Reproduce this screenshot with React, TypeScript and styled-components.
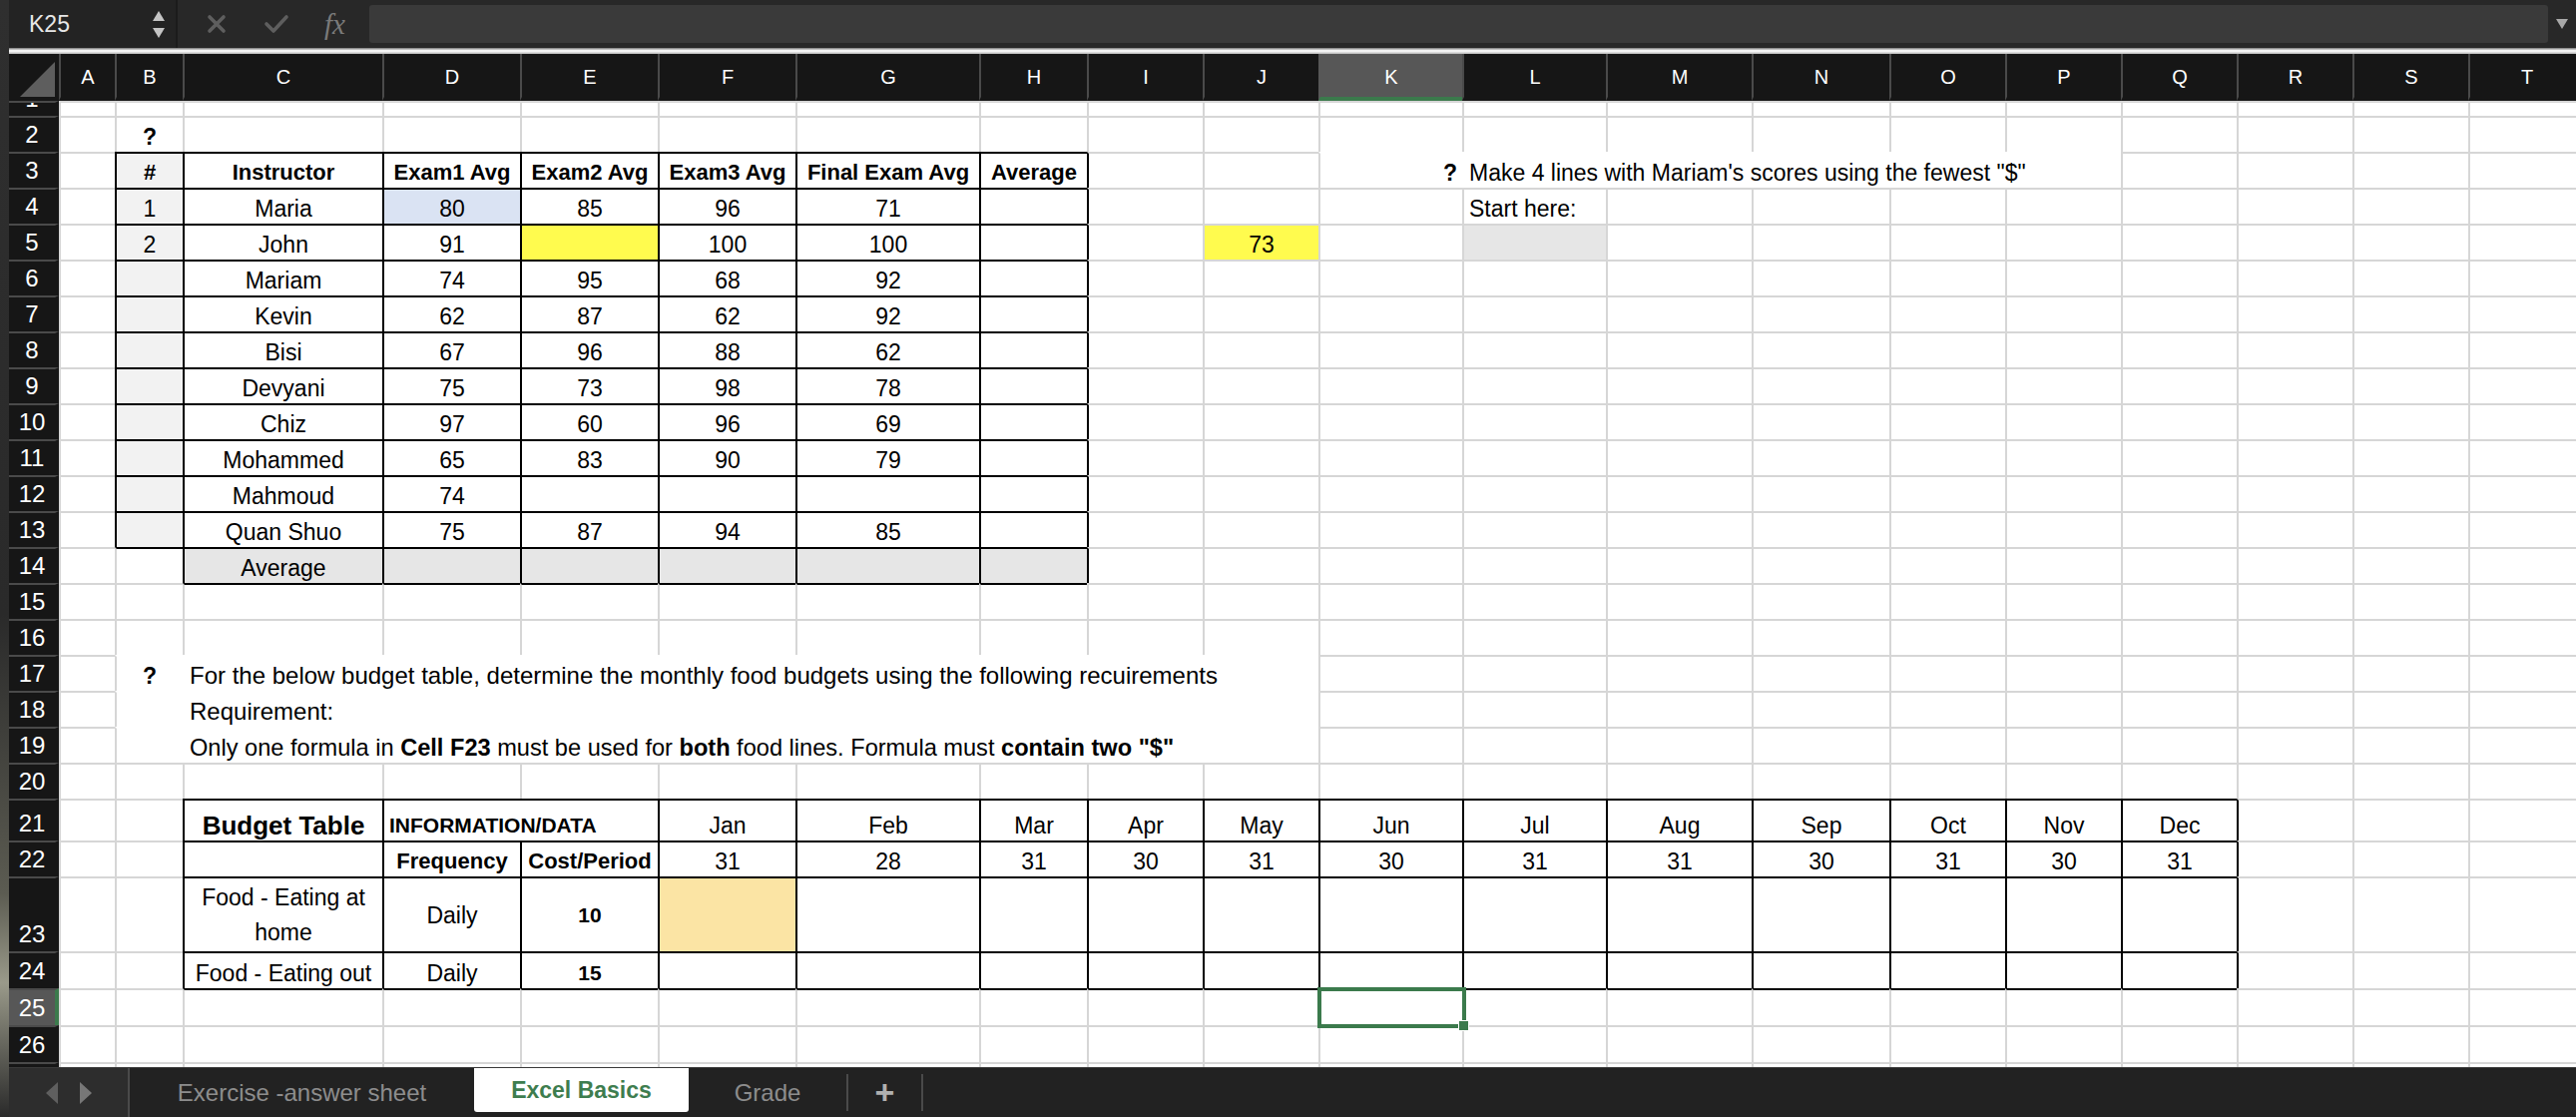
import React from "react";
import styled, { createGlobalStyle } from "styled-components";

const GlobalStyle = createGlobalStyle`
  html, body {
    margin: 0;
    padding: 0;
    background: #2c2c2c;
    overflow: hidden;
  }
  body {
    font-family: "Liberation Sans", Arial, sans-serif;
  }
`;

const GREEN = "#3b7a4c";
const GRID = "#d6d6d6";

const COLS = [
  { k: "A", w: 56 },
  { k: "B", w: 68 },
  { k: "C", w: 200 },
  { k: "D", w: 138 },
  { k: "E", w: 138 },
  { k: "F", w: 138 },
  { k: "G", w: 184 },
  { k: "H", w: 108 },
  { k: "I", w: 116 },
  { k: "J", w: 116 },
  { k: "K", w: 144 },
  { k: "L", w: 144 },
  { k: "M", w: 146 },
  { k: "N", w: 138 },
  { k: "O", w: 116 },
  { k: "P", w: 116 },
  { k: "Q", w: 116 },
  { k: "R", w: 116 },
  { k: "S", w: 116 },
  { k: "T", w: 116 },
];

const ROWS: { n: string; h: number }[] = [
  { n: "1", h: 15 },
  ...Array.from({ length: 19 }, (_, i) => ({ n: String(i + 2), h: 36 })),
  { n: "21", h: 42 },
  { n: "22", h: 36 },
  { n: "23", h: 75 },
  { n: "24", h: 37 },
  { n: "25", h: 37 },
  { n: "26", h: 37 },
  { n: "", h: 5 },
];

type Box = [number, number, number, number];
// column index (A = 0), row number
const BOXES: Box[] = [
  [1, 3, 7, 13],
  [2, 14, 7, 14],
  [2, 21, 16, 24],
];
const FILLS: Box[] = [
  [1, 17, 9, 19],
  [10, 3, 15, 3],
];

const inBox = (c: number, r: number, b: Box) =>
  c >= b[0] && c <= b[2] && r >= b[1] && r <= b[3];
const boxed = (c: number, r: number) => BOXES.some((b) => inBox(c, r, b));
const filled = (c: number, r: number) => FILLS.some((b) => inBox(c, r, b));

type Line = "grid" | "black" | "none";
const lineColor = (l: Line) =>
  l === "black" ? "#000" : l === "grid" ? GRID : "transparent";

const topLine = (c: number, r: number): Line => {
  if (boxed(c, r) || boxed(c, r - 1)) return "black";
  if (filled(c, r)) return "none";
  return "grid";
};
const leftLine = (c: number, r: number): Line => {
  if (boxed(c, r) || boxed(c - 1, r)) return "black";
  if (filled(c, r) && filled(c - 1, r)) return "none";
  return "grid";
};

type Def = {
  v?: React.ReactNode;
  bold?: boolean;
  align?: "left" | "center" | "right";
  valign?: "center" | "bottom";
  size?: number;
  bg?: string;
  wrap?: boolean;
  span?: number;
  over?: boolean;
  sel?: boolean;
};

const SCORES = [
  ["1", "Maria", "80", "85", "96", "71"],
  ["2", "John", "91", "", "100", "100"],
  ["", "Mariam", "74", "95", "68", "92"],
  ["", "Kevin", "62", "87", "62", "92"],
  ["", "Bisi", "67", "96", "88", "62"],
  ["", "Devyani", "75", "73", "98", "78"],
  ["", "Chiz", "97", "60", "96", "69"],
  ["", "Mohammed", "65", "83", "90", "79"],
  ["", "Mahmoud", "74", "", "", ""],
  ["", "Quan Shuo", "75", "87", "94", "85"],
];

const MONTHS = [
  ["Jan", "31"],
  ["Feb", "28"],
  ["Mar", "31"],
  ["Apr", "30"],
  ["May", "31"],
  ["Jun", "30"],
  ["Jul", "31"],
  ["Aug", "31"],
  ["Sep", "30"],
  ["Oct", "31"],
  ["Nov", "30"],
  ["Dec", "31"],
];

const SHEET: Record<string, Def> = {
  B2: { v: "?", bold: true },
  B3: { v: "#", bold: true, size: 22 },
  C3: { v: "Instructor", bold: true, size: 22 },
  D3: { v: "Exam1 Avg", bold: true, size: 22 },
  E3: { v: "Exam2 Avg", bold: true, size: 22 },
  F3: { v: "Exam3 Avg", bold: true, size: 22 },
  G3: { v: "Final Exam Avg", bold: true, size: 22 },
  H3: { v: "Average", bold: true, size: 22 },
  K3: { v: "?", bold: true, align: "right" },
  L3: { v: 'Make 4 lines with Mariam\'s scores using the fewest "$"', align: "left", over: true },
  L4: { v: "Start here:", align: "left" },
  J5: { v: "73", bg: "#fffb4e" },
  L5: { bg: "#e6e6e6" },
  C14: { v: "Average", bg: "#e6e6e6" },
  B17: { v: "?", bold: true },
  C17: {
    v: "For the below budget table, determine the monthly food budgets using the following recuirements",
    align: "left",
    over: true,
    size: 24,
  },
  C18: { v: "Requirement:", align: "left", over: true, size: 24 },
  C19: {
    v: (
      <>
        Only one formula in <b>Cell F23</b> must be used for <b>both</b> food lines. Formula must{" "}
        <b>contain two "$"</b>
      </>
    ),
    align: "left",
    over: true,
    size: 23.6,
  },
  C21: { v: "Budget Table", bold: true, size: 26 },
  D21: { v: "INFORMATION/DATA", bold: true, size: 21, align: "left", span: 2 },
  D22: { v: "Frequency", bold: true, size: 22 },
  E22: { v: "Cost/Period", bold: true, size: 22 },
  C23: { v: "Food - Eating at home", wrap: true, valign: "center" },
  D23: { v: "Daily", valign: "center" },
  E23: { v: "10", bold: true, size: 21, valign: "center" },
  F23: { bg: "#fbe4a4" },
  C24: { v: "Food - Eating out" },
  D24: { v: "Daily" },
  E24: { v: "15", bold: true, size: 21 },
  K25: { sel: true },
};

SCORES.forEach((row, i) => {
  const r = i + 4;
  ["B", "C", "D", "E", "F", "G"].forEach((c, j) => {
    SHEET[c + r] = { ...(SHEET[c + r] ?? {}), v: row[j] };
  });
  SHEET["H" + r] = SHEET["H" + r] ?? {};
});
for (let r = 3; r <= 13; r++) {
  SHEET["B" + r] = { ...(SHEET["B" + r] ?? {}), bg: "#f2f2f2" };
}
SHEET.D4 = { ...SHEET.D4, bg: "#dae3f3" };
SHEET.E5 = { ...SHEET.E5, bg: "#fffb4e" };
["D", "E", "F", "G", "H"].forEach((c) => {
  SHEET[c + 14] = { bg: "#e6e6e6" };
});
MONTHS.forEach(([m, d], i) => {
  const c = COLS[5 + i].k;
  SHEET[c + 21] = { v: m };
  SHEET[c + 22] = { v: d };
});

const covered = (ci: number, r: number) => r === 21 && ci === 4;

/* ---------- layout ---------- */

const Screen = styled.div`
  display: flex;
  width: 2581px;
  height: 1119px;
  overflow: hidden;
  background: #2e2e2e;
`;

const Backdrop = styled.div`
  flex: none;
  width: 9px;
  background: linear-gradient(#2f2f2f, #2a2a2a 55%, #5c5c52 80%, #9a9a8a 88%, #2a2a2a);
`;

const Window = styled.div`
  flex: 1;
  min-width: 0;
  display: flex;
  flex-direction: column;
`;

/* ---------- formula bar ---------- */

const FormulaBar = styled.div`
  flex: none;
  height: 48px;
  display: flex;
  align-items: stretch;
  background: #282828;
`;

const NameBox = styled.div`
  flex: none;
  width: 169px;
  box-sizing: border-box;
  display: flex;
  align-items: center;
  justify-content: space-between;
  padding: 0 11px 0 20px;
  background: #232323;
  border-right: 2px solid #1b1b1b;
  color: #e6e6e6;
  font-family: "Liberation Sans", Arial, sans-serif;
  font-size: 23px;
`;

const Tools = styled.div`
  flex: none;
  width: 192px;
  box-sizing: border-box;
  display: flex;
  align-items: center;
  gap: 35px;
  padding-left: 27px;
`;

const Fx = styled.span`
  font-family: "Liberation Serif", "Times New Roman", serif;
  font-style: italic;
  font-size: 29px;
  color: #7a7a7a;
  line-height: 1;
`;

const FormulaInput = styled.div`
  flex: 1;
  margin: 5px 0;
  background: #3a3a3a;
  border-radius: 3px;
`;

const DropArea = styled.div`
  flex: none;
  width: 28px;
  display: flex;
  align-items: center;
  justify-content: center;
`;

const Divider = styled.div`
  flex: none;
  height: 6px;
  background: linear-gradient(#8e8e8e 0, #8e8e8e 1px, #f2f2f2 2px, #f2f2f2 4px, #c4c4c4 5px);
`;

/* ---------- grid ---------- */

const Sheet = styled.div`
  flex: none;
  height: 1015px;
  overflow: hidden;
  display: grid;
  grid-template-columns: 50px ${COLS.map((c) => c.w + "px").join(" ")};
  grid-template-rows: 47px ${ROWS.map((r) => r.h + "px").join(" ")};
  background: #fff;
`;

const Corner = styled.div`
  background: #161616;
  display: flex;
  align-items: flex-end;
  justify-content: flex-end;
  padding: 0 4px 4px 0;
`;

const ColHead = styled.div<{ $sel?: boolean }>`
  box-sizing: border-box;
  display: flex;
  align-items: center;
  justify-content: center;
  padding-top: 3px;
  background: ${(p) => (p.$sel ? "#575757" : "#161616")};
  border-left: 2px solid ${(p) => (p.$sel ? "#575757" : "#4a4a4a")};
  border-bottom: 4px solid ${(p) => (p.$sel ? GREEN : "#161616")};
  color: #fff;
  font-family: "Liberation Sans", Arial, sans-serif;
  font-size: 20px;
`;

const RowHead = styled.div<{ $sel?: boolean }>`
  box-sizing: border-box;
  overflow: hidden;
  display: flex;
  align-items: flex-end;
  justify-content: center;
  padding-bottom: 3px;
  background: ${(p) => (p.$sel ? "#575757" : "#161616")};
  border-top: 2px solid #4a4a4a;
  border-right: 4px solid ${(p) => (p.$sel ? GREEN : "#161616")};
  color: #fff;
  font-family: "Liberation Sans", Arial, sans-serif;
  font-size: 24px;
  line-height: 28px;
`;

type CellStyle = {
  $top: Line;
  $left: Line;
  $bg?: string;
  $bold?: boolean;
  $align?: "left" | "center" | "right";
  $valign?: "center" | "bottom";
  $size?: number;
  $wrap?: boolean;
  $span?: number;
  $over?: boolean;
};

const Cell = styled.div<CellStyle>`
  position: relative;
  box-sizing: border-box;
  min-width: 0;
  display: flex;
  align-items: ${(p) => (p.$valign === "center" ? "center" : "flex-end")};
  justify-content: ${(p) =>
    p.$align === "left" ? "flex-start" : p.$align === "right" ? "flex-end" : "center"};
  text-align: ${(p) => p.$align ?? "center"};
  padding: ${(p) => (p.$valign === "center" ? "0 4px" : "0 5px 2px")};
  grid-column: span ${(p) => p.$span ?? 1};
  background: ${(p) => p.$bg ?? "transparent"};
  border-top: 2px solid ${(p) => lineColor(p.$top)};
  border-left: 2px solid ${(p) => lineColor(p.$left)};
  color: #000;
  font-family: "Liberation Sans", Arial, sans-serif;
  font-size: ${(p) => p.$size ?? 23}px;
  font-weight: ${(p) => (p.$bold ? 700 : 400)};
  line-height: ${(p) => (p.$wrap ? 35 : 26)}px;
  white-space: ${(p) => (p.$wrap ? "normal" : "nowrap")};
  ${(p) => (p.$over ? "z-index: 1;" : "")}
`;

const Content = styled.span`
  display: block;
`;

const Selection = styled.div`
  position: absolute;
  top: -3px;
  left: -3px;
  right: -4px;
  bottom: -3px;
  border: 4px solid ${GREEN};
  z-index: 3;
  pointer-events: none;
`;

const Handle = styled.div`
  position: absolute;
  right: -7px;
  bottom: -7px;
  width: 9px;
  height: 9px;
  background: ${GREEN};
  border: 1px solid #fff;
`;

/* ---------- sheet tabs ---------- */

const TabBar = styled.div`
  flex: none;
  height: 50px;
  display: flex;
  background: #222;
  border-top: 1px solid #3a3a3a;
  box-sizing: border-box;
`;

const Nav = styled.div`
  flex: none;
  width: 121px;
  box-sizing: border-box;
  display: flex;
  align-items: center;
  justify-content: center;
  gap: 22px;
  background: #2d2d2d;
  border-right: 2px solid #4a4a4a;
`;

const Tab = styled.div<{ $active?: boolean; $w: number }>`
  flex: none;
  width: ${(p) => p.$w}px;
  box-sizing: border-box;
  display: flex;
  align-items: center;
  justify-content: center;
  margin-bottom: ${(p) => (p.$active ? 5 : 0)}px;
  background: ${(p) => (p.$active ? "#fff" : "transparent")};
  border-radius: ${(p) => (p.$active ? "0 0 3px 3px" : "0")};
  color: ${(p) => (p.$active ? "#3e7d4f" : "#8d8d8d")};
  font-family: "Liberation Sans", Arial, sans-serif;
  font-size: ${(p) => (p.$active ? 23 : 24)}px;
  font-weight: ${(p) => (p.$active ? 700 : 400)};
`;

const TabSep = styled.div`
  flex: none;
  width: 2px;
  margin: 6px 0;
  background: #4a4a4a;
`;

const PlusTab = styled(Tab)`
  color: #b0b0b0;
  font-size: 34px;
  font-weight: 700;
`;

function Triangle({ dir, color }: { dir: "up" | "down" | "left" | "right"; color: string }) {
  const pts =
    dir === "up"
      ? "0,10 6,0 12,10"
      : dir === "down"
      ? "0,0 12,0 6,10"
      : dir === "left"
      ? "12,0 12,22 0,11"
      : "0,0 0,22 12,11";
  const w = 12;
  const h = dir === "up" || dir === "down" ? 10 : 22;
  return (
    <svg width={w} height={h} viewBox={`0 0 ${w} ${h}`}>
      <polygon points={pts} fill={color} />
    </svg>
  );
}

const StepperBox = styled.div`
  display: flex;
  flex-direction: column;
  gap: 7px;
`;

function Stepper() {
  return (
    <StepperBox>
      <Triangle dir="up" color="#c4c4c4" />
      <Triangle dir="down" color="#c4c4c4" />
    </StepperBox>
  );
}

function CancelIcon() {
  return (
    <svg width="24" height="24" viewBox="0 0 24 24">
      <path d="M5 5 L19 19 M19 5 L5 19" stroke="#5e5e5e" strokeWidth="3.6" strokeLinecap="round" />
    </svg>
  );
}

function EnterIcon() {
  return (
    <svg width="26" height="24" viewBox="0 0 26 24">
      <path
        d="M3 12 L10 19 L23 5"
        stroke="#5e5e5e"
        strokeWidth="3.6"
        fill="none"
        strokeLinecap="round"
        strokeLinejoin="round"
      />
    </svg>
  );
}

export default function App() {
  return (
    <>
      <GlobalStyle />
      <Screen>
        <Backdrop />
        <Window>
          <FormulaBar>
            <NameBox>
              K25
              <Stepper />
            </NameBox>
            <Tools>
              <CancelIcon />
              <EnterIcon />
              <Fx>fx</Fx>
            </Tools>
            <FormulaInput />
            <DropArea>
              <Triangle dir="down" color="#a8a8a8" />
            </DropArea>
          </FormulaBar>
          <Divider />
          <Sheet>
            <Corner>
              <svg width="35" height="35" viewBox="0 0 35 35">
                <polygon points="35,0 35,35 0,35" fill="#5e5e5e" />
              </svg>
            </Corner>
            {COLS.map((c) => (
              <ColHead key={c.k} $sel={c.k === "K"}>
                {c.k}
              </ColHead>
            ))}
            {ROWS.map((row, ri) => {
              const r = ri + 1;
              return (
                <React.Fragment key={r}>
                  <RowHead $sel={r === 25}>{row.n}</RowHead>
                  {COLS.map((col, ci) => {
                    if (covered(ci, r)) return null;
                    const d = SHEET[col.k + r] ?? {};
                    return (
                      <Cell
                        key={col.k + r}
                        $top={topLine(ci, r)}
                        $left={leftLine(ci, r)}
                        $bg={d.bg}
                        $bold={d.bold}
                        $align={d.align}
                        $valign={d.valign}
                        $size={d.size}
                        $wrap={d.wrap}
                        $span={d.span}
                        $over={d.over}
                      >
                        {d.v !== undefined && d.v !== "" && <Content>{d.v}</Content>}
                        {d.sel && (
                          <Selection>
                            <Handle />
                          </Selection>
                        )}
                      </Cell>
                    );
                  })}
                </React.Fragment>
              );
            })}
          </Sheet>
          <TabBar>
            <Nav>
              <Triangle dir="left" color="#5f5f5f" />
              <Triangle dir="right" color="#777" />
            </Nav>
            <Tab $w={345}>Exercise -answer sheet</Tab>
            <Tab $w={215} $active>
              Excel Basics
            </Tab>
            <Tab $w={158}>Grade</Tab>
            <TabSep />
            <PlusTab $w={73}>+</PlusTab>
            <TabSep />
          </TabBar>
        </Window>
      </Screen>
    </>
  );
}
